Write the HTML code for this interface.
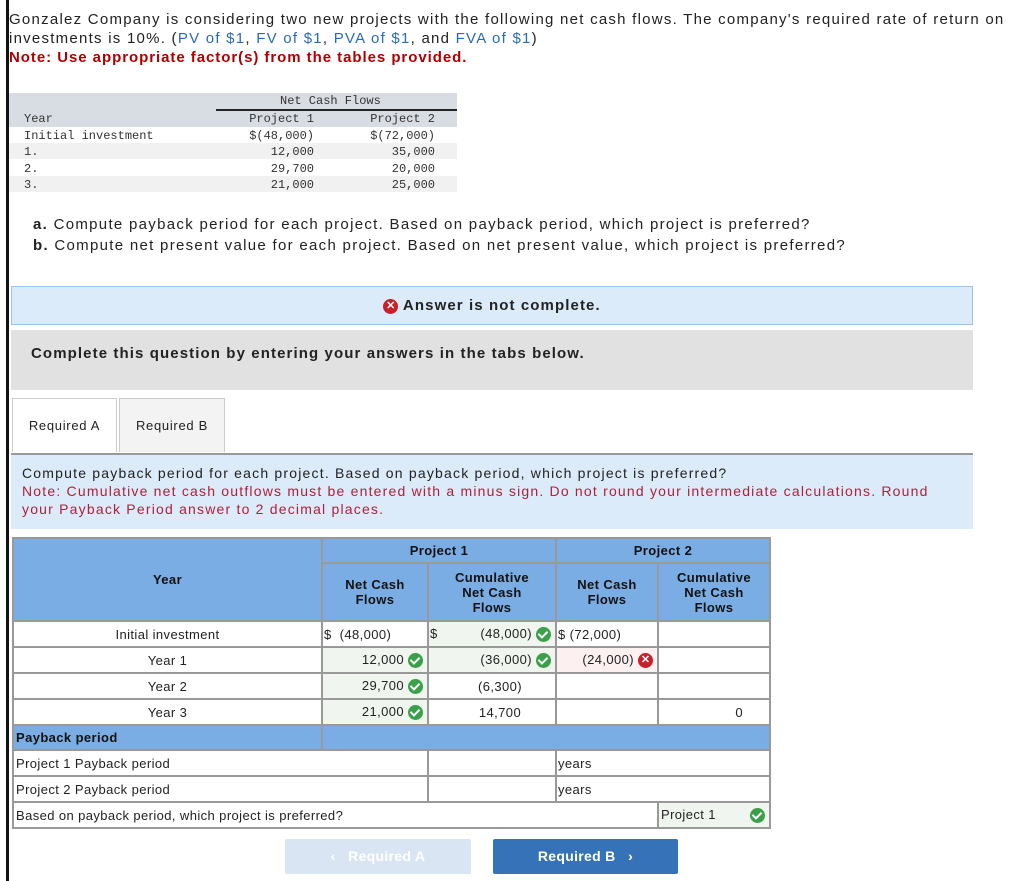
<!DOCTYPE html>
<html><head><meta charset="utf-8"><style>
*{margin:0;padding:0;box-sizing:border-box}
body{width:1029px;height:881px;background:#fff;position:relative;overflow:hidden;font-family:"Liberation Sans",sans-serif;color:#222}
.a{position:absolute}
.vl{left:6px;top:0;width:3px;height:881px;background:#111}
.intro{left:9px;top:10px;font-size:15px;letter-spacing:1.25px;line-height:19px;color:#222;width:1018px}
.intro a{color:#2a6ab8}
.note{color:#b00000;font-weight:bold;letter-spacing:0.95px}
.mono{font-family:"Liberation Mono",monospace;font-size:12px;color:#333}
.q{left:33px;top:214px;font-size:15px;letter-spacing:1.3px;line-height:21px}
.ans{left:11px;top:286px;width:962px;height:39px;background:#dcebf9;border:1px solid #9cc4ea;text-align:center;font-weight:bold;font-size:15px;letter-spacing:1.1px;line-height:37px}
.comp{left:11px;top:330px;width:962px;height:60px;background:#e1e1e1;font-weight:bold;font-size:15px;letter-spacing:1.1px;padding:15px 0 0 20px}
.tab{top:398px;height:54px;font-size:13px;letter-spacing:0.7px;line-height:54px;text-align:center;border:1px solid #ccc;border-bottom:none}
.inst{left:11px;top:453px;width:962px;height:76px;background:#dcebf9;border-top:2px solid #999;font-size:14px;letter-spacing:1.2px;line-height:18px;padding:9px 20px 0 11px}
table.m{position:absolute;left:12px;top:537px;border-collapse:collapse;font-size:13px;letter-spacing:0.4px}
table.m td{border:2px solid #999;padding:0 4px;white-space:nowrap}
.h{background:#7aade3;font-weight:bold;text-align:center;color:#111}
.ck{display:inline-block;width:15px;height:15px;border-radius:50%;background:#3aa04a;vertical-align:middle;position:relative}
.ck:after{content:"";position:absolute;left:4px;top:2px;width:4px;height:7px;border:solid #fff;border-width:0 2px 2px 0;transform:rotate(45deg)}
.x{display:inline-block;width:15px;height:15px;border-radius:50%;background:#c8202a;color:#fff;font-size:11px;line-height:15px;text-align:center;font-weight:bold;vertical-align:middle;letter-spacing:0}
.g{background:#f0f6ef}
.btn{top:839px;height:35px;font-weight:bold;font-size:14px;letter-spacing:0.3px;line-height:35px;text-align:center;border-radius:2px}
</style></head><body>
<div class="a vl"></div>
<div class="a intro">Gonzalez Company is considering two new projects with the following net cash flows. The company's required rate of return on investments is 10%. (<a>PV of $1</a>, <a>FV of $1</a>, <a>PVA of $1</a>, and <a>FVA of $1</a>)<br><span class="note">Note: Use appropriate factor(s) from the tables provided.</span></div>

<div class="a" style="left:9px;top:93px;width:448px;height:34px;background:#d8dce3"></div>
<div class="a" style="left:216px;top:109px;width:241px;height:2px;background:#222"></div>
<div class="a" style="left:9px;top:143px;width:448px;height:16px;background:#f1f1f1"></div>
<div class="a" style="left:9px;top:176px;width:448px;height:16px;background:#f1f1f1"></div>
<div class="a mono" style="left:280px;top:94px">Net Cash Flows</div>
<div class="a mono" style="left:24px;top:111px;line-height:16.5px">Year<br>Initial investment<br>1.<br>2.<br>3.</div>
<div class="a mono" style="left:220px;top:111px;width:94px;text-align:right;line-height:16.5px">Project 1<br>$(48,000)<br>12,000<br>29,700<br>21,000</div>
<div class="a mono" style="left:340px;top:111px;width:95px;text-align:right;line-height:16.5px">Project 2<br>$(72,000)<br>35,000<br>20,000<br>25,000</div>

<div class="a q"><b>a.</b> Compute payback period for each project. Based on payback period, which project is preferred?<br><b>b.</b> Compute net present value for each project. Based on net present value, which project is preferred?</div>

<div class="a ans"><span class="x">✕</span> Answer is not complete.</div>
<div class="a comp">Complete this question by entering your answers in the tabs below.</div>
<div class="a tab" style="left:12px;width:105px;background:#fff">Required A</div>
<div class="a tab" style="left:119px;width:106px;background:#f3f3f3">Required B</div>
<div class="a inst">Compute payback period for each project. Based on payback period, which project is preferred?<br><span style="color:#b0203a">Note: Cumulative net cash outflows must be entered with a minus sign. Do not round your intermediate calculations. Round your Payback Period answer to 2 decimal places.</span></div>

<table class="m">
<colgroup><col style="width:309px"><col style="width:106px"><col style="width:128px"><col style="width:102px"><col style="width:112px"></colgroup>
<tr style="height:25px"><td class="h" rowspan="2">Year</td><td class="h" colspan="2">Project 1</td><td class="h" colspan="2">Project 2</td></tr>
<tr style="height:58px"><td class="h">Net Cash<br>Flows</td><td class="h">Cumulative<br>Net Cash<br>Flows</td><td class="h">Net Cash<br>Flows</td><td class="h">Cumulative<br>Net Cash<br>Flows</td></tr>
<tr style="height:26px"><td style="text-align:center">Initial investment</td><td style="padding-left:1px">$&nbsp; (48,000)</td><td class="g" style="padding-left:1px">$<span style="float:right">(48,000) <span class="ck"></span></span></td><td style="padding-left:1px">$&nbsp;(72,000)</td><td></td></tr>
<tr style="height:26px"><td style="text-align:center">Year 1</td><td class="g" style="text-align:right">12,000 <span class="ck"></span></td><td class="g" style="text-align:right">(36,000) <span class="ck"></span></td><td style="background:#fdf0f0;text-align:right">(24,000) <span class="x">✕</span></td><td></td></tr>
<tr style="height:26px"><td style="text-align:center">Year 2</td><td class="g" style="text-align:right">29,700 <span class="ck"></span></td><td style="text-align:center;padding-left:20px">(6,300)</td><td></td><td></td></tr>
<tr style="height:26px"><td style="text-align:center">Year 3</td><td class="g" style="text-align:right">21,000 <span class="ck"></span></td><td style="text-align:center;padding-left:20px">14,700</td><td></td><td style="text-align:right;padding-right:26px">0</td></tr>
<tr style="height:25px"><td class="h" style="text-align:left;padding-left:2px">Payback period</td><td class="h" colspan="4"></td></tr>
<tr style="height:26px"><td colspan="2" style="padding-left:2px">Project 1 Payback period</td><td></td><td colspan="2" style="padding-left:1px">years</td></tr>
<tr style="height:26px"><td colspan="2" style="padding-left:2px">Project 2 Payback period</td><td></td><td colspan="2" style="padding-left:1px">years</td></tr>
<tr style="height:26px"><td colspan="4" style="padding-left:2px">Based on payback period, which project is preferred?</td><td class="g" style="padding-left:2px">Project 1<span class="ck" style="float:right;margin-top:1px"></span></td></tr>
</table>

<div class="a btn" style="left:285px;width:186px;background:#d9e5f3;color:#fff">‹&nbsp;&nbsp; Required A</div>
<div class="a btn" style="left:493px;width:185px;background:#3572b8;color:#fff">Required B &nbsp;&nbsp;›</div>
</body></html>
